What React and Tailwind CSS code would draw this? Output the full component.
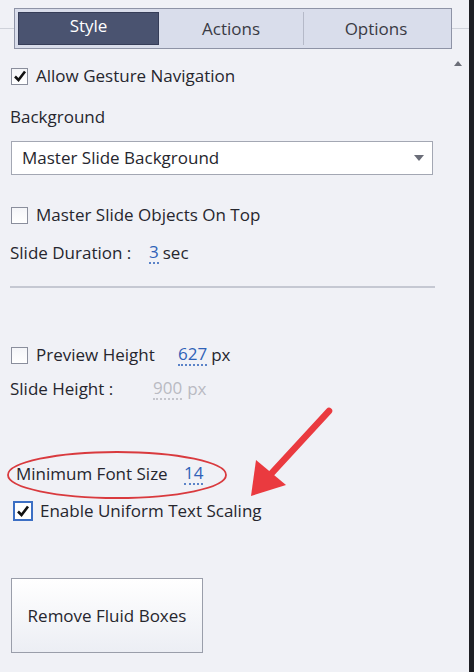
import React from "react";

function Checkbox({ checked, focused }) {
  return (
    <div
      className={
        focused
          ? "w-[20px] h-[20px] border-2 border-[#3c6fc4] bg-white flex items-center justify-center shrink-0"
          : "w-[17px] h-[17px] border border-[#8a8e9c] bg-gradient-to-b from-[#f4f5f8] to-white flex items-center justify-center shrink-0"
      }
    >
      {checked && (
        <svg width="14" height="14" viewBox="0 0 14 14">
          <path d="M2 7.5 L5.5 11 L12 2.5" fill="none" stroke="#111" strokeWidth="2.6" />
        </svg>
      )}
    </div>
  );
}

function Num({ value, muted, className = "" }) {
  return (
    <span
      className={`border-b-2 border-dotted leading-[20px] ${
        muted ? "text-[#b9bac2] border-[#c4c5cc]" : "text-[#2f62b8] border-[#5b83c8]"
      } ${className}`}
    >
      {value}
    </span>
  );
}

export default function App() {
  const tabs = ["Style", "Actions", "Options"];
  return (
    <div
      className="w-[474px] h-[672px] flex bg-[#f0f1f6] overflow-hidden text-[#26262e] text-[17px]"
      style={{ fontFamily: '"Open Sans", "Noto Sans", sans-serif' }}
    >
      <div className="flex-1 relative flex flex-col">
        {/* tab strip */}
        <div className="flex items-center mt-[8px] h-[41px]">
          <div className="w-[14px] border-t border-[#cfd2da]" />
          <div className="w-[438px] h-[41px] border border-[#8e93a6] bg-[#d9ddeb] p-[3px] flex">
            {tabs.map((t, i) => (
              <div
                key={t}
                className={
                  i === 0
                    ? "w-[141px] bg-[#4a5370] border border-[#363d58] text-white flex items-center justify-center pb-[5px]"
                    : `flex-1 flex items-center justify-center text-[#3a3a44] ${
                        i === 2 ? "border-l border-[#b5b9c8]" : ""
                      }`
                }
              >
                {t}
              </div>
            ))}
          </div>
          <div className="flex-1 border-t border-[#cfd2da]" />
        </div>

        <div className="absolute left-[454px] top-[61px] w-0 h-0 border-l-[4px] border-r-[4px] border-b-[5px] border-l-transparent border-r-transparent border-b-[#6b6e78]" />

        <div className="pl-[11px] pr-[34px]">
          <div className="mt-[17px] h-[20px] flex items-center gap-[8px]">
            <Checkbox checked />
            <span>Allow Gesture Navigation</span>
          </div>

          <div className="mt-[21px] h-[20px] flex items-center -ml-[1px]">Background</div>

          <div className="mt-[14px] h-[34px] w-[422px] border border-[#a3a7b3] bg-white flex items-center justify-between pl-[10px] pr-[8px]">
            <span>Master Slide Background</span>
            <div className="w-0 h-0 border-l-[5px] border-r-[5px] border-t-[6px] border-l-transparent border-r-transparent border-t-[#6a6d78]" />
          </div>

          <div className="mt-[30px] h-[20px] flex items-center gap-[8px]">
            <Checkbox />
            <span>Master Slide Objects On Top</span>
          </div>

          <div className="mt-[18px] h-[20px] flex items-center -ml-[1px]">
            <span className="w-[139px]">Slide Duration :</span>
            <Num value="3" />
            <span className="ml-[4px]">sec</span>
          </div>

          <div className="mt-[23px] w-[425px] -ml-[1px] border-t-2 border-[#c5c8d2]" />

          <div className="mt-[57px] h-[20px] flex items-center gap-[8px]">
            <Checkbox />
            <span className="w-[134px]">Preview Height</span>
            <Num value="627" />
            <span className="-ml-[4px]">px</span>
          </div>

          <div className="mt-[14px] h-[20px] flex items-center -ml-[1px]">
            <span className="w-[143px]">Slide Height :</span>
            <Num value="900" muted />
            <span className="ml-[5px] text-[#b9bac2]">px</span>
          </div>

          <div className="mt-[65px] h-[20px] flex items-center relative pl-[5px]">
            <span className="w-[168px]">Minimum Font Size</span>
            <Num value="14" />
          </div>

          <div className="mt-[17px] h-[20px] flex items-center gap-[7px] pl-[2px]">
            <Checkbox checked focused />
            <span>Enable Uniform Text Scaling</span>
          </div>

          <button className="mt-[57px] w-[192px] h-[75px] border border-[#9a9eaa] bg-gradient-to-b from-white to-[#eceef4] text-[#26262e] flex items-center justify-center">
            Remove Fluid Boxes
          </button>
        </div>

        {/* annotations */}
        <svg className="absolute left-0 top-0 pointer-events-none" width="466" height="672">
          <ellipse cx="117" cy="475" rx="109" ry="23" fill="none" stroke="#d93a3e" strokeWidth="1.8" />
          <line x1="329" y1="411" x2="270" y2="475" stroke="#ea3a3f" strokeWidth="6.5" strokeLinecap="round" />
          <polygon points="251,496 256,460 286,485" fill="#ea3a3f" />
        </svg>
      </div>
      <div className="w-[8px] bg-[#1e1f24]" />
    </div>
  );
}
